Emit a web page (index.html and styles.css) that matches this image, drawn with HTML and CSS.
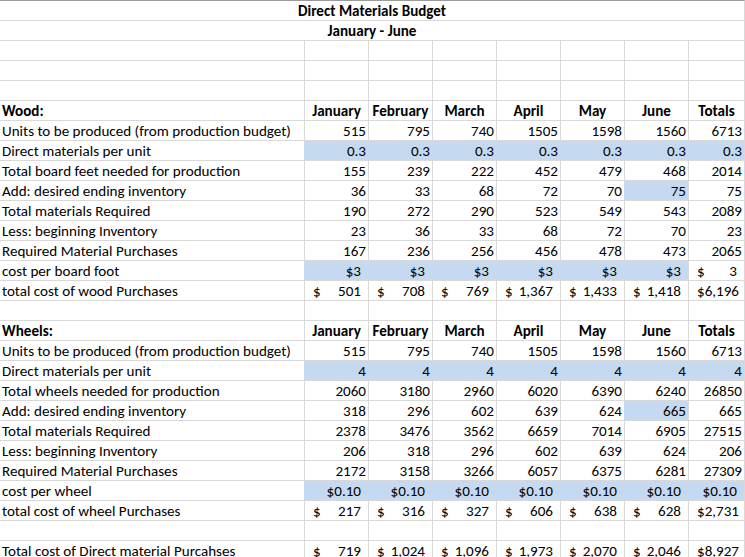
FILE: index.html
```html
<!DOCTYPE html>
<html>
<head>
<meta charset="utf-8">
<link rel="stylesheet" href="styles.css">
</head>
<body>
<div class="sheet">
  <div class="row merged first"><div class="title">Direct Materials Budget</div></div>
  <div class="row merged"><div class="title">January - June</div></div>
  <div class="row"><div class="c lbl"></div><div class="c"></div><div class="c"></div><div class="c"></div><div class="c"></div><div class="c"></div><div class="c"></div><div class="c"></div></div>
  <div class="row"><div class="c lbl"></div><div class="c"></div><div class="c"></div><div class="c"></div><div class="c"></div><div class="c"></div><div class="c"></div><div class="c"></div></div>
  <div class="row"><div class="c lbl"></div><div class="c"></div><div class="c"></div><div class="c"></div><div class="c"></div><div class="c"></div><div class="c"></div><div class="c"></div></div>

  <div class="row"><div class="c lbl bold">Wood:</div><div class="c hdr">January</div><div class="c hdr">February</div><div class="c hdr">March</div><div class="c hdr">April</div><div class="c hdr">May</div><div class="c hdr">June</div><div class="c hdr">Totals</div></div>
  <div class="row"><div class="c lbl">Units to be produced (from production budget)</div><div class="c n">515</div><div class="c n">795</div><div class="c n">740</div><div class="c n">1505</div><div class="c n">1598</div><div class="c n">1560</div><div class="c n">6713</div></div>
  <div class="row"><div class="c lbl">Direct materials per unit</div><div class="c n b">0.3</div><div class="c n b">0.3</div><div class="c n b">0.3</div><div class="c n b">0.3</div><div class="c n b">0.3</div><div class="c n b">0.3</div><div class="c n b">0.3</div></div>
  <div class="row"><div class="c lbl">Total board feet needed for production</div><div class="c n">155</div><div class="c n">239</div><div class="c n">222</div><div class="c n">452</div><div class="c n">479</div><div class="c n">468</div><div class="c n">2014</div></div>
  <div class="row"><div class="c lbl">Add: desired ending inventory</div><div class="c n">36</div><div class="c n">33</div><div class="c n">68</div><div class="c n">72</div><div class="c n">70</div><div class="c n b">75</div><div class="c n">75</div></div>
  <div class="row"><div class="c lbl">Total materials Required</div><div class="c n">190</div><div class="c n">272</div><div class="c n">290</div><div class="c n">523</div><div class="c n">549</div><div class="c n">543</div><div class="c n">2089</div></div>
  <div class="row"><div class="c lbl">Less: beginning Inventory</div><div class="c n">23</div><div class="c n">36</div><div class="c n">33</div><div class="c n">68</div><div class="c n">72</div><div class="c n">70</div><div class="c n">23</div></div>
  <div class="row"><div class="c lbl">Required Material Purchases</div><div class="c n">167</div><div class="c n">236</div><div class="c n">256</div><div class="c n">456</div><div class="c n">478</div><div class="c n">473</div><div class="c n">2065</div></div>
  <div class="row"><div class="c lbl">cost per board foot</div><div class="c cur b">$3</div><div class="c cur b">$3</div><div class="c cur b">$3</div><div class="c cur b">$3</div><div class="c cur b">$3</div><div class="c cur b">$3</div><div class="c acc"><span>$</span><span>3</span></div></div>
  <div class="row"><div class="c lbl">total cost of wood Purchases</div><div class="c acc"><span>$</span><span>501</span></div><div class="c acc"><span>$</span><span>708</span></div><div class="c acc"><span>$</span><span>769</span></div><div class="c acc"><span>$</span><span>1,367</span></div><div class="c acc"><span>$</span><span>1,433</span></div><div class="c acc"><span>$</span><span>1,418</span></div><div class="c acc"><span>$</span><span>6,196</span></div></div>
  <div class="row"><div class="c lbl"></div><div class="c"></div><div class="c"></div><div class="c"></div><div class="c"></div><div class="c"></div><div class="c"></div><div class="c"></div></div>

  <div class="row"><div class="c lbl bold">Wheels:</div><div class="c hdr">January</div><div class="c hdr">February</div><div class="c hdr">March</div><div class="c hdr">April</div><div class="c hdr">May</div><div class="c hdr">June</div><div class="c hdr">Totals</div></div>
  <div class="row"><div class="c lbl">Units to be produced (from production budget)</div><div class="c n">515</div><div class="c n">795</div><div class="c n">740</div><div class="c n">1505</div><div class="c n">1598</div><div class="c n">1560</div><div class="c n">6713</div></div>
  <div class="row"><div class="c lbl">Direct materials per unit</div><div class="c n b">4</div><div class="c n b">4</div><div class="c n b">4</div><div class="c n b">4</div><div class="c n b">4</div><div class="c n b">4</div><div class="c n b">4</div></div>
  <div class="row"><div class="c lbl">Total wheels needed for production</div><div class="c n">2060</div><div class="c n">3180</div><div class="c n">2960</div><div class="c n">6020</div><div class="c n">6390</div><div class="c n">6240</div><div class="c n">26850</div></div>
  <div class="row"><div class="c lbl">Add: desired ending inventory</div><div class="c n">318</div><div class="c n">296</div><div class="c n">602</div><div class="c n">639</div><div class="c n">624</div><div class="c n b">665</div><div class="c n">665</div></div>
  <div class="row"><div class="c lbl">Total materials Required</div><div class="c n">2378</div><div class="c n">3476</div><div class="c n">3562</div><div class="c n">6659</div><div class="c n">7014</div><div class="c n">6905</div><div class="c n">27515</div></div>
  <div class="row"><div class="c lbl">Less: beginning Inventory</div><div class="c n">206</div><div class="c n">318</div><div class="c n">296</div><div class="c n">602</div><div class="c n">639</div><div class="c n">624</div><div class="c n">206</div></div>
  <div class="row"><div class="c lbl">Required Material Purchases</div><div class="c n">2172</div><div class="c n">3158</div><div class="c n">3266</div><div class="c n">6057</div><div class="c n">6375</div><div class="c n">6281</div><div class="c n">27309</div></div>
  <div class="row"><div class="c lbl">cost per wheel</div><div class="c cur b">$0.10</div><div class="c cur b">$0.10</div><div class="c cur b">$0.10</div><div class="c cur b">$0.10</div><div class="c cur b">$0.10</div><div class="c cur b">$0.10</div><div class="c cur b">$0.10</div></div>
  <div class="row"><div class="c lbl">total cost of wheel Purchases</div><div class="c acc"><span>$</span><span>217</span></div><div class="c acc"><span>$</span><span>316</span></div><div class="c acc"><span>$</span><span>327</span></div><div class="c acc"><span>$</span><span>606</span></div><div class="c acc"><span>$</span><span>638</span></div><div class="c acc"><span>$</span><span>628</span></div><div class="c acc"><span>$</span><span>2,731</span></div></div>
  <div class="row"><div class="c lbl"></div><div class="c"></div><div class="c"></div><div class="c"></div><div class="c"></div><div class="c"></div><div class="c"></div><div class="c"></div></div>
  <div class="row"><div class="c lbl">Total cost of Direct material Purcahses</div><div class="c acc"><span>$</span><span>719</span></div><div class="c acc"><span>$</span><span>1,024</span></div><div class="c acc"><span>$</span><span>1,096</span></div><div class="c acc"><span>$</span><span>1,973</span></div><div class="c acc"><span>$</span><span>2,070</span></div><div class="c acc"><span>$</span><span>2,046</span></div><div class="c acc"><span>$</span><span>8,927</span></div></div>
</div>
</body>
</html>
```

FILE: styles.css
```css
html, body {
  margin: 0;
  padding: 0;
  background: #ffffff;
  overflow: hidden;
}

.sheet {
  width: 745px;
  font-family: Carlito, Calibri, Lato, sans-serif;
  font-size: 15.1px;
  color: #000000;
}

.row {
  display: grid;
  grid-template-columns: 304px repeat(6, 64px) 57px;
  height: 20px;
  box-sizing: border-box;
  border-top: 1px solid #d9d9d9;
}

.row.first {
  border-top-color: #9b9b9b;
}

.row.merged {
  display: block;
  border-right: 1px solid #d9d9d9;
}

.title {
  text-align: center;
  font-weight: bold;
  height: 19px;
  line-height: 21px;
  white-space: nowrap;
  overflow: hidden;
}

.c {
  box-sizing: border-box;
  height: 19px;
  line-height: 21px;
  white-space: nowrap;
  overflow: hidden;
  border-left: 1px solid #d9d9d9;
}

.c:last-child {
  border-right: 1px solid #d9d9d9;
}

.lbl {
  border-left: none;
  padding-left: 2px;
}

.bold {
  font-weight: bold;
}

.hdr {
  font-weight: bold;
  text-align: center;
}

.n {
  text-align: right;
  padding-right: 2px;
}

.cur {
  text-align: right;
  padding-right: 7px;
}

.acc {
  display: flex;
  justify-content: space-between;
  padding-left: 8px;
  padding-right: 7px;
}

.b {
  background: #c5d9f1;
  border-left-color: #c5d9f1;
}
```
